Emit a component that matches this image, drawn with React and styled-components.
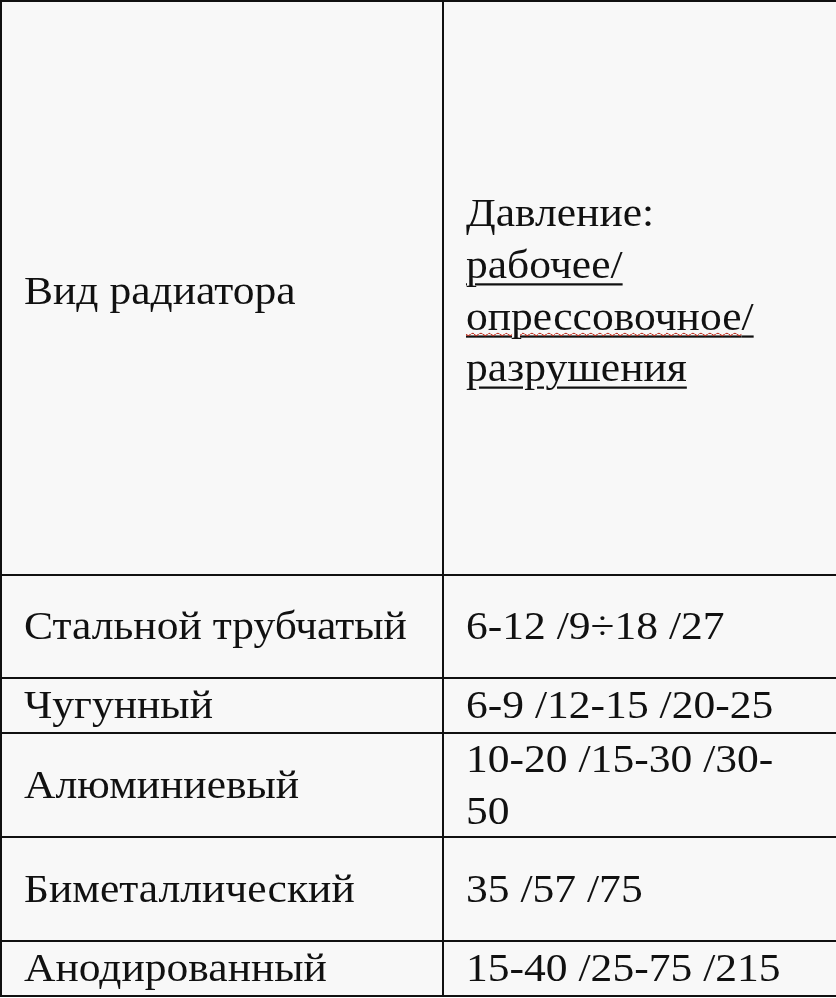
import React from "react";
import styled, { createGlobalStyle } from "styled-components";

const Global = createGlobalStyle`
  html, body {
    margin: 0;
    padding: 0;
    background: #ffffff;
    overflow: hidden;
  }
`;

const rows = [
  { name: "Стальной трубчатый", value: ["6-12 /9÷18 /27"], h: 101 },
  { name: "Чугунный", value: ["6-9 /12-15 /20-25"], h: 53 },
  { name: "Алюминиевый", value: ["10-20 /15-30 /30-", "50"], h: 102 },
  { name: "Биметаллический", value: ["35 /57 /75"], h: 102 },
  { name: "Анодированный", value: ["15-40 /25-75 /215"], h: 53 },
];

export default function App() {
  return (
    <>
      <Global />
      <Table>
        <Row $h={572}>
          <Cell $top={6}>
            <Text>
              <span>Вид радиатора</span>
            </Text>
          </Cell>
          <Cell $top={6}>
            <Text>
              <span>Давление:</span>
              <Under>рабочее/</Under>
              <Under>
                <Spell>опрессовочное</Spell>/
              </Under>
              <Under>разрушения</Under>
            </Text>
          </Cell>
        </Row>
        {rows.map((r) => (
          <Row key={r.name} $h={r.h}>
            <Cell>
              <Text>
                <span>{r.name}</span>
              </Text>
            </Cell>
            <Cell>
              <Text>
                {r.value.map((v) => (
                  <span key={v}>{v}</span>
                ))}
              </Text>
            </Cell>
          </Row>
        ))}
      </Table>
    </>
  );
}

const Table = styled.div`
  width: 900px;
  display: flex;
  flex-direction: column;
  border-left: 2px solid #111;
  border-bottom: 2px solid #111;
`;

const Row = styled.div`
  display: grid;
  grid-template-columns: 442px 1fr;
  height: ${(p) => p.$h}px;
  border-top: 2px solid #111;
`;

const Cell = styled.div`
  display: flex;
  align-items: center;
  padding: ${(p) => p.$top || 0}px 0 0 22px;
  background: #f8f8f8;
  &:first-child {
    border-right: 2px solid #111;
  }
`;

const Text = styled.div`
  display: flex;
  flex-direction: column;
  align-items: flex-start;
  font-family: "Liberation Serif", "Times New Roman", serif;
  font-size: 36px;
  line-height: 46.8px;
  color: #111;
  white-space: nowrap;
  transform: scale(1.21, 1.11);
  transform-origin: left center;
  will-change: transform;
`;

const Under = styled.span`
  text-decoration: underline;
  text-decoration-thickness: 2px;
  text-underline-offset: 5px;
`;

const Spell = styled.span`
  text-decoration: underline wavy #c0392b;
  text-decoration-thickness: 1px;
  text-underline-offset: 2px;
`;
